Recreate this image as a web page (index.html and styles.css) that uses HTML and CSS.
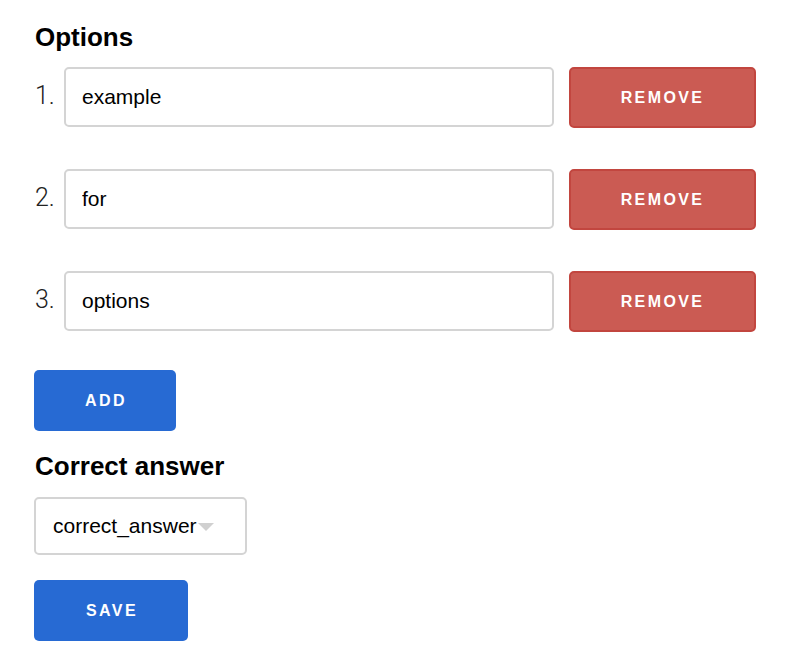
FILE: index.html
```html
<!DOCTYPE html>
<html lang="en">
<head>
<meta charset="utf-8">
<title>Options</title>
<link rel="stylesheet" href="styles.css">
</head>
<body>
<main class="editor">
  <h2 class="heading heading-options">Options</h2>
  <ol class="option-list">
    <li class="option-row">
      <span class="option-num">1.</span>
      <input class="option-input" type="text" value="example">
      <button class="btn btn-remove" type="button">Remove</button>
    </li>
    <li class="option-row">
      <span class="option-num">2.</span>
      <input class="option-input" type="text" value="for">
      <button class="btn btn-remove" type="button">Remove</button>
    </li>
    <li class="option-row">
      <span class="option-num">3.</span>
      <input class="option-input" type="text" value="options">
      <button class="btn btn-remove" type="button">Remove</button>
    </li>
  </ol>
  <button class="btn btn-primary btn-add" type="button">Add</button>
  <h2 class="heading heading-answer">Correct answer</h2>
  <div class="select" role="combobox" aria-expanded="false">
    <span class="select-text">correct_answer</span>
    <span class="select-arrow"></span>
  </div>
  <button class="btn btn-primary btn-save" type="button">Save</button>
</main>
</body>
</html>
```

FILE: styles.css
```css
html, body {
  margin: 0;
  padding: 0;
  background: #ffffff;
}

body {
  font-family: "Liberation Sans", Arial, Helvetica, sans-serif;
  color: #000;
}

.editor {
  padding: 22px 0 0 34px;
  display: flex;
  flex-direction: column;
  align-items: flex-start;
}

.heading {
  margin: 0;
  font-size: 26px;
  line-height: 30px;
  font-weight: 700;
}

.heading-options {
  margin-left: 1px;
}

.heading-answer {
  margin-top: 20px;
  margin-left: 1px;
}

.option-list {
  list-style: none;
  margin: 15px 0 0 0;
  padding: 0;
  display: flex;
  flex-direction: column;
  gap: 42px;
}

.option-row {
  display: flex;
  align-items: center;
  height: 60px;
}

.option-num {
  width: 30px;
  padding-left: 1px;
  box-sizing: border-box;
  font-family: "Roboto", "Liberation Sans", sans-serif;
  font-weight: 300;
  font-size: 25px;
  color: #222;
  position: relative;
  top: -2px;
}

.option-input {
  box-sizing: border-box;
  width: 490px;
  height: 60px;
  margin: 0;
  border: 2px solid #d4d4d4;
  border-radius: 5px;
  padding: 0 16px;
  font-family: "Liberation Sans", Arial, sans-serif;
  font-size: 21px;
  color: #000;
  background: #fff;
  outline: none;
}

.btn {
  box-sizing: border-box;
  height: 61px;
  margin: 0;
  padding-top: 2px;
  border: none;
  border-radius: 5px;
  font-family: "Liberation Sans", Arial, sans-serif;
  font-weight: 700;
  font-size: 16px;
  letter-spacing: 2.4px;
  text-transform: uppercase;
  color: #fff;
  cursor: pointer;
}

.btn-remove {
  width: 187px;
  height: 61px;
  margin-left: 15px;
  background: #cb5b53;
  border: 2px solid #c2463f;
}

.btn-primary {
  background: #276ad3;
  padding-left: 50px;
  padding-right: 48px;
}

.btn-add {
  width: 142px;
  margin-top: 39px;
}

.btn-save {
  width: 154px;
  margin-top: 25px;
}

.select {
  box-sizing: border-box;
  width: 213px;
  height: 58px;
  margin-top: 16px;
  border: 2px solid #d4d4d4;
  border-radius: 5px;
  padding-left: 17px;
  display: flex;
  align-items: center;
  font-size: 21px;
  color: #000;
  background: #fff;
}

.select-arrow {
  width: 0;
  height: 0;
  margin-left: 1px;
  border-left: 8px solid transparent;
  border-right: 8px solid transparent;
  border-top: 8px solid #d0d0d0;
  position: relative;
  top: 1px;
}
```
